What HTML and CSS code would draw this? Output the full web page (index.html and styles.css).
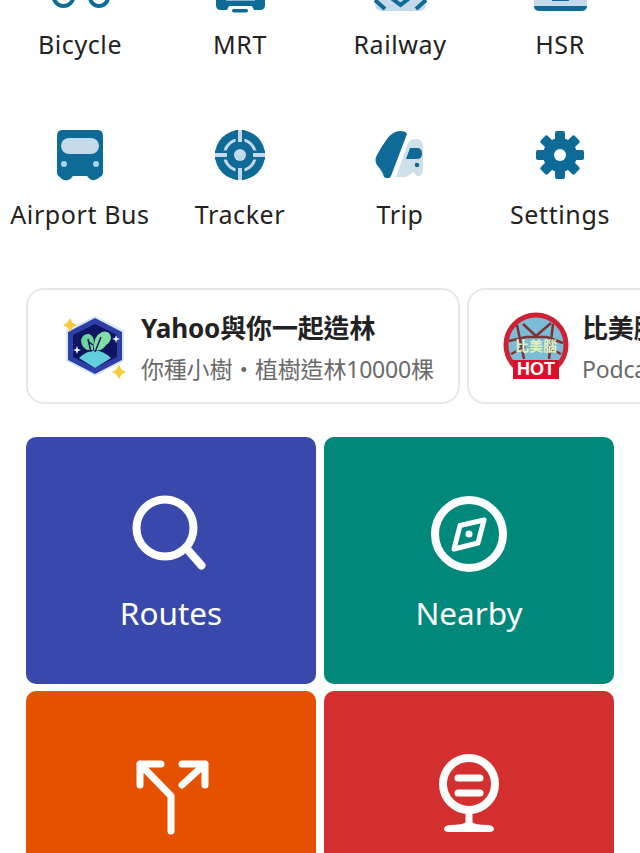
FILE: index.html
```html
<!DOCTYPE html>
<html lang="zh-Hant">
<head>
<meta charset="utf-8">
<title>Transit</title>
<link rel="stylesheet" href="styles.css">
</head>
<body>
<main class="page">
  <section class="nav">
    <div class="nav-item">
      <svg class="nav-icon" viewBox="-5 0 60 50"><circle class="stroke-dark" cx="8.5" cy="36" r="10"/><circle class="stroke-dark" cx="44" cy="37" r="9"/></svg>
      <span class="nav-label">Bicycle</span>
    </div>
    <div class="nav-item">
      <svg class="nav-icon" viewBox="-5 0 60 50"><path class="fill-dark" d="M1 30H50V45Q50 50 45 50H39L37 46H14L12 50H6Q1 50 1 45Z"/><rect class="fill-white" x="11" y="30" width="29" height="10.500"/><rect class="fill-dark" x="17" y="49" width="16" height="3.500" rx="1.700"/></svg>
      <span class="nav-label">MRT</span>
    </div>
    <div class="nav-item">
      <svg class="nav-icon" viewBox="-5 0 60 50"><path class="fill-light" d="M0 30H51V44Q51 51 44 51H7Q0 51 0 44Z"/><path class="stroke-dark-thin" d="M0 40L10 49M51 40L41 49M6 30L25.500 45L45 30M16 30L25.500 37L35 30"/></svg>
      <span class="nav-label">Railway</span>
    </div>
    <div class="nav-item">
      <svg class="nav-icon" viewBox="-5 0 60 50"><path class="fill-light" d="M-1 30H52V45Q52 51 46 51H5Q-1 51 -1 45Z"/><path class="fill-dark" d="M-1 46H52Q52 51 46 51H5Q-1 51 -1 46Z"/><rect class="fill-dark" x="17" y="38" width="17" height="3"/></svg>
      <span class="nav-label">HSR</span>
    </div>
    <div class="nav-item">
      <svg class="nav-icon" viewBox="-5 0 60 50"><path class="fill-dark" d="M7 0H43Q48 0 48 6V42Q48 46 45 47Q41 51 37 50Q34 49 32 46H18Q16 49 13 50Q8 51 5 47Q2 46 2 42V6Q2 0 7 0Z"/><rect class="fill-light" x="6" y="8" width="38" height="16" rx="8"/><circle class="fill-lightblue" cx="9" cy="34" r="3"/><circle class="fill-lightblue" cx="41" cy="34" r="3"/></svg>
      <span class="nav-label">Airport Bus</span>
    </div>
    <div class="nav-item">
      <svg class="nav-icon" viewBox="-5 0 60 50"><circle class="fill-dark" cx="25" cy="25" r="25"/><circle class="ring-light" cx="25" cy="25" r="15.500"/><path class="cross-dark" d="M25 0V50M0 25H50"/><path class="cross-light" d="M25 0V12M25 38V50M0 25H12M38 25H50"/><circle class="fill-light" cx="25" cy="25" r="6"/></svg>
      <span class="nav-label">Tracker</span>
    </div>
    <div class="nav-item">
      <svg class="nav-icon" viewBox="-5 0 60 50"><path class="fill-pale" d="M33 13Q35 9 42 9Q48 10 48 16V40Q47 47 42 46L38 42Q32 48 27 47H21Z"/><path class="fill-dark" d="M25 1Q31 1 32 4L16 46Q14 50 9 47Q8 42 2 35Q-1 30 2 25Q6 17 12 9Q18 1 25 1Z"/><path class="fill-dark" d="M35 18H42Q47 18 47 23.500Q47 29 42 29H31Z"/><circle class="fill-dark" cx="42" cy="35" r="2.300"/></svg>
      <span class="nav-label">Trip</span>
    </div>
    <div class="nav-item">
      <svg class="nav-icon" viewBox="-5 0 60 50"><g class="fill-dark"><rect x="20" y="1" width="10" height="48" rx="2"/><rect x="20" y="1" width="10" height="48" rx="2" transform="rotate(45 25 25)"/><rect x="20" y="1" width="10" height="48" rx="2" transform="rotate(90 25 25)"/><rect x="20" y="1" width="10" height="48" rx="2" transform="rotate(135 25 25)"/><circle cx="25" cy="25" r="17"/></g><circle class="fill-white" cx="25" cy="25" r="6"/></svg>
      <span class="nav-label">Settings</span>
    </div>
  </section>

  <section class="promos">
    <article class="promo">
      <svg class="promo-badge" viewBox="0 0 70 70">
        <path class="hex-glow" d="M35 5L64 19V50L35 65L6 50V19Z"/>
        <path class="hex-rim" d="M35 7L62 21V49L35 63L8 49V21Z"/>
        <path class="hex-core" d="M35 13L57 24V46L35 57L13 46V24Z"/>
        <path class="hill" d="M19 47Q35 32 51 47L35 57Z"/>
        <path class="leaf-a" d="M21 29Q23 22 29 23Q34 25 34 31Q33 37 33 39H27Q21 36 21 29Z"/>
        <path class="leaf-b" d="M34 39Q33 25 42 21Q50 19 51 27Q50 32 46 34Q42 41 34 39Z"/>
        <path class="twig" d="M28 28L31 41M41 26L35 41M33 34L29 31"/>
        <path class="spark-gold" d="M10 7L12.500 11.500L17 14L12.500 16.500L10 21L7.500 16.500L3 14L7.500 11.500Z"/>
        <path class="spark-gold" d="M59 54L61.500 58.500L66 61L61.500 63.500L59 68L56.500 63.500L52 61L56.500 58.500Z"/>
        <path class="spark-white" d="M17 35L18 38L21 39L18 40L17 43L16 40L13 39L16 38Z"/>
        <path class="spark-white" d="M56 24L57 27L60 28L57 29L56 32L55 29L52 28L55 27Z"/>
      </svg>
      <div class="promo-text">
        <div class="promo-title">Yahoo與你一起造林</div>
        <div class="promo-sub">你種小樹・植樹造林10000棵</div>
      </div>
    </article>
    <article class="promo">
      <svg class="promo-badge" viewBox="0 0 70 70">
        <circle class="hot-disc" cx="35" cy="34" r="30"/>
        <path class="hot-lines" d="M16 14L23 48M22 13L35 25L50 12M52 13L48 48M8 30L25 26L46 26L62 32M10 43L24 36M60 43L46 36"/>
        <text class="hot-word" x="35" y="40">比美腦</text>
        <rect class="hot-tag" x="12" y="49" width="46" height="19"/>
        <text class="hot-text" x="35" y="64">HOT</text>
      </svg>
      <div class="promo-text">
        <div class="promo-title">比美腦</div>
        <div class="promo-sub">Podcast</div>
      </div>
    </article>
  </section>

  <section class="tiles">
    <a class="tile tile-blue">
      <svg class="tile-icon" viewBox="0 0 100 100"><circle class="line" cx="44" cy="41" r="28.500"/><path class="line" d="M66 62L80.500 78.500"/></svg>
      <span class="tile-label">Routes</span>
    </a>
    <a class="tile tile-green">
      <svg class="tile-icon" viewBox="0 0 100 100"><circle class="line" cx="50" cy="47" r="34"/><path class="diamond" d="M65 33L41 38.500L35 62L59 56Z"/><circle class="fill-white" cx="50" cy="47" r="3.500"/></svg>
      <span class="tile-label">Nearby</span>
    </a>
    <a class="tile tile-orange">
      <svg class="tile-icon" viewBox="0 0 100 100"><path class="line-thin" d="M50 90V55L19 23M40 23H19V44M61 44L84 23M61 23H84V44"/></svg>
    </a>
    <a class="tile tile-red">
      <svg class="tile-icon" viewBox="0 0 100 100"><circle class="line" cx="50" cy="43" r="26"/><path class="line-thin" d="M39 37H61M39 52H61M50 72V84"/><path class="fill-white" d="M47 81H53Q55 84 70 84Q75 85 75 88Q75 91 70 91H30Q25 91 25 88Q25 85 30 84Q45 84 47 81Z"/></svg>
    </a>
  </section>
</main>
</body>
</html>
```

FILE: styles.css
```css
html, body {
  margin: 0;
  padding: 0;
  height: 853px;
  overflow: hidden;
  background: #fff;
}

.page {
  font-family: "Noto Sans", "Noto Sans CJK TC", sans-serif;
  color: #222;
}

.nav {
  display: grid;
  grid-template-columns: repeat(4, 160px);
  row-gap: 68.5px;
  margin-top: -40px;
}

.nav-item {
  display: flex;
  flex-direction: column;
  align-items: center;
}

.nav-icon {
  width: 60px;
  height: 50px;
  overflow: visible;
}

.nav-label {
  margin-top: 17px;
  font-size: 25px;
  line-height: 34px;
  letter-spacing: 0.6px;
  white-space: nowrap;
}

.fill-dark { fill: #0e6a96; }
.fill-light { fill: #c5d9ea; }
.fill-pale { fill: #cfe0e8; }
.fill-lightblue { fill: #a9d6ee; }
.fill-white { fill: #fff; }
.stroke-dark { fill: none; stroke: #0e6a96; stroke-width: 4; }
.stroke-dark-thin { fill: none; stroke: #0e6a96; stroke-width: 4; }
.ring-light { fill: none; stroke: #c5d9ea; stroke-width: 3; }
.cross-dark { fill: none; stroke: #0e6a96; stroke-width: 9; }
.cross-light { fill: none; stroke: #c5d9ea; stroke-width: 4; }

.promos {
  display: flex;
  gap: 7px;
  margin-top: 57.5px;
  padding-left: 26px;
  overflow: hidden;
}

.promo {
  flex: 0 0 434px;
  box-sizing: border-box;
  height: 116px;
  display: flex;
  align-items: center;
  gap: 11px;
  padding-left: 32px;
  border: 2px solid #e8e8e8;
  border-radius: 18px;
}

.promo-badge {
  flex: none;
  width: 70px;
  height: 70px;
  overflow: visible;
}

.promo-text {
  padding-top: 2px;
  white-space: nowrap;
}

.promo-title {
  font-size: 26px;
  font-weight: 700;
  line-height: 38px;
  letter-spacing: -0.15px;
  color: #222;
}

.promo-sub {
  margin-top: 6px;
  font-size: 23px;
  line-height: 32px;
  letter-spacing: -0.2px;
  color: #6a6a6a;
}

.hex-glow { fill: #b4d0f6; opacity: .5; }
.hex-rim { fill: #2f3fa8; }
.hex-core { fill: #0f1560; }
.hill { fill: #62d0dc; }
.leaf-a { fill: #6fd49c; }
.leaf-b { fill: #7fe0a6; }
.twig { fill: none; stroke: #0f1560; stroke-width: 1.500; }
.spark-gold { fill: #f8cc3c; }
.spark-white { fill: #fff; }
.hot-disc { fill: #7cbcd8; stroke: #cc2233; stroke-width: 5; }
.hot-lines { fill: none; stroke: #7c3434; stroke-width: 2.500; }
.hot-word { fill: #e4efc0; font-size: 14px; font-weight: 700; text-anchor: middle; }
.hot-tag { fill: #d8112a; }
.hot-text { fill: #fff; font-family: "Liberation Sans", sans-serif; font-size: 18px; font-weight: 700; text-anchor: middle; }

.tiles {
  display: grid;
  grid-template-columns: repeat(2, 290px);
  column-gap: 8px;
  row-gap: 7px;
  margin-top: 33px;
  padding-left: 26px;
}

.tile {
  height: 247px;
  box-sizing: border-box;
  padding-top: 50px;
  display: flex;
  flex-direction: column;
  align-items: center;
  border-radius: 10px;
  color: #fff;
}

.tile-icon {
  width: 100px;
  height: 100px;
  overflow: visible;
}

.tile-label {
  margin-top: 5px;
  font-size: 31.5px;
  line-height: 42px;
}

.tile-blue { background: #3949ab; }
.tile-green { background: #00897b; }
.tile-orange { background: #e65100; }
.tile-red { background: #d32f2f; }

.line { fill: none; stroke: #fff; stroke-width: 8; stroke-linecap: round; }
.line-thin { fill: none; stroke: #fff; stroke-width: 7; stroke-linecap: round; stroke-linejoin: round; }
.diamond { fill: none; stroke: #fff; stroke-width: 5; stroke-linejoin: round; }
```
